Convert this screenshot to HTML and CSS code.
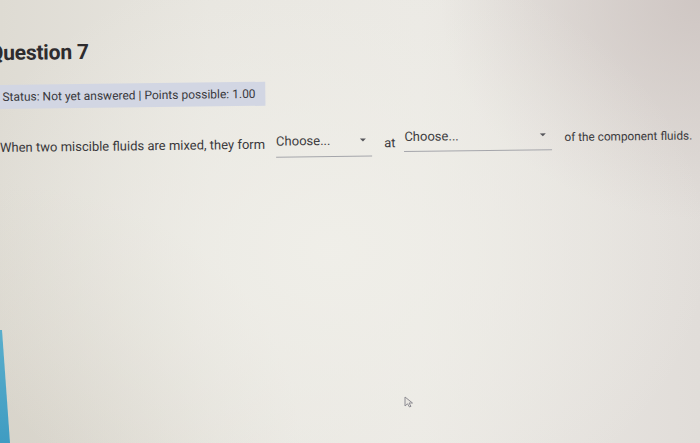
FILE: index.html
```html
<!DOCTYPE html>
<html>
<head>
<meta charset="utf-8">
<link rel="stylesheet" href="styles.css">
</head>
<body>
<div class="screen">
  <div class="content">
    <h2 class="title">Question 7</h2>
    <div class="status">Status: Not yet answered | Points possible: 1.00</div>
    <div class="sentence">
      <span class="txt">When two miscible fluids are mixed, they form</span>
      <span class="select s1"><span class="label">Choose...</span><span class="arrow"></span></span>
      <span class="txt">at</span>
      <span class="select s2"><span class="label">Choose...</span><span class="arrow"></span></span>
      <span class="txt raised">of the component fluids.</span>
    </div>
  </div>
  <div class="edge"></div>
  <svg class="cursor" width="10" height="12" viewBox="0 0 10 12"><path d="M1 1 L1 10 L3.5 7.8 L5.5 11 L7 10.3 L5 7 L8.5 7 Z" fill="#e9e7e2" stroke="#8d8c92" stroke-width="1"/></svg>
</div>
</body>
</html>
```
FILE: styles.css
```css
html, body {
  margin: 0;
  padding: 0;
}
body {
  width: 700px;
  height: 443px;
  overflow: hidden;
  font-family: Roboto, "Liberation Sans", sans-serif;
}
.screen {
  position: relative;
  width: 700px;
  height: 443px;
  overflow: hidden;
  background:
    radial-gradient(ellipse 380px 300px at 330px 250px, rgba(240,239,233,0.9), rgba(240,239,233,0) 100%),
    radial-gradient(ellipse 260px 220px at 700px 0px, rgba(205,196,193,0.9), rgba(205,196,193,0) 100%),
    radial-gradient(ellipse 300px 260px at 0px 443px, rgba(214,210,200,0.8), rgba(214,210,200,0) 100%),
    linear-gradient(90deg, #dedbd3 0%, #e8e6e0 30%, #ebe9e4 60%, #e1ddd9 100%);
}
.content {
  padding-top: 40px;
  transform: rotate(-0.7deg);
  transform-origin: 0 150px;
}
.title {
  margin: 0 0 0 -10px;
  font-size: 21px;
  font-weight: 700;
  color: #2e2c2e;
  line-height: 26px;
  letter-spacing: -0.2px;
}
.status {
  margin-top: 19px;
  width: 263px;
  height: 24px;
  padding-left: 3px;
  box-sizing: content-box;
  background: #d2d6e3;
  color: #38383c;
  font-size: 12px;
  line-height: 25px;
  white-space: nowrap;
}
.sentence {
  margin-top: 27px;
  display: flex;
  align-items: flex-start;
  color: #3a393c;
  font-size: 13px;
  line-height: 17px;
  white-space: nowrap;
}
.txt {
  padding-top: 3px;
}
.raised {
  padding-top: 0;
  margin-left: 12px;
  font-size: 11.8px;
}
.select {
  display: flex;
  justify-content: space-between;
  align-items: flex-start;
  height: 24px;
  border-bottom: 1px solid #a5a6ab;
  color: #3d3c40;
}
.s1 {
  width: 96px;
  margin-left: 11px;
  margin-right: 12px;
}
.s2 {
  width: 148px;
  margin-left: 9px;
  margin-top: -3px;
  height: 23px;
}
.arrow {
  width: 0;
  height: 0;
  margin-top: 7px;
  margin-right: 6px;
  border-left: 3px solid transparent;
  border-right: 3px solid transparent;
  border-top: 3px solid #55555a;
}
.edge {
  position: absolute;
  left: 0;
  top: 330px;
  width: 10px;
  height: 113px;
  background: linear-gradient(180deg, #5aaecc, #3f9cc2);
  clip-path: polygon(0 0, 20% 0, 100% 100%, 0 100%);
}
.cursor {
  position: absolute;
  left: 404px;
  top: 396px;
}
```
